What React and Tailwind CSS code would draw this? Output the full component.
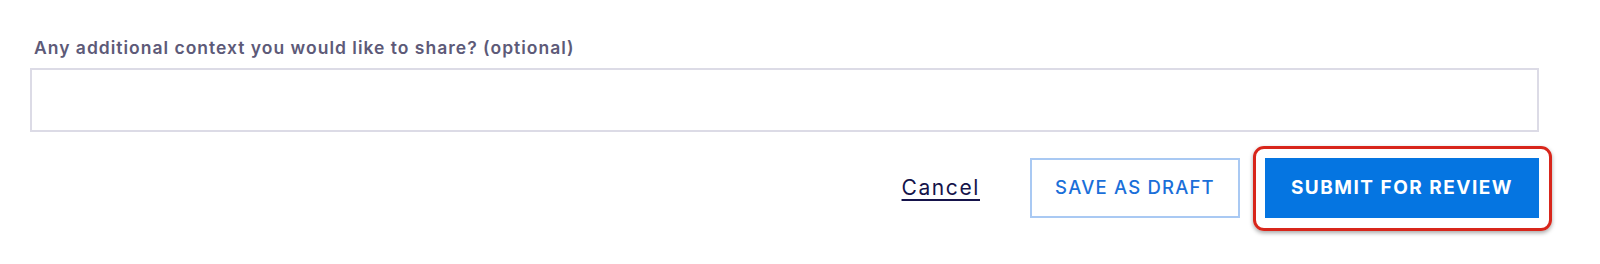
export default function App() {
  return (
    <div className="w-[1600px] h-[264px] bg-white font-['Inter',sans-serif]">
      <div className="pl-[30px] pr-[61px] pt-[37px]">
        <label className="block pl-[4px] text-[17.5px] font-semibold text-[#5d5a78] leading-[22px] tracking-[1px]">
          Any additional context you would like to share? (optional)
        </label>
        <textarea className="mt-[9px] block w-full h-[64px] border-2 border-[#dcdbe6] resize-none outline-none" />
        <div className="mt-[26px] flex items-center justify-end">
          <a href="#" className="text-[21px] text-[#15134a] underline underline-offset-[4px] decoration-[1.5px] tracking-[1.6px] mr-[50px]">
            Cancel
          </a>
          <button className="w-[210px] h-[60px] border-2 border-[#a9c9f3] text-[#1a6fd9] text-[18.5px] font-medium tracking-[1.2px]">
            SAVE AS DRAFT
          </button>
          <div className="relative ml-[25px]">
            <button className="w-[274px] h-[60px] bg-[#0575e1] text-white text-[19px] font-bold tracking-[1.5px]">
              SUBMIT FOR REVIEW
            </button>
            <div className="absolute -top-[12px] -bottom-[13px] -left-[12px] -right-[13px] rounded-[11px] border-[3px] border-[#d8261b] shadow-[0_2px_4px_rgba(0,0,0,0.35)] pointer-events-none" />
          </div>
        </div>
      </div>
    </div>
  );
}
